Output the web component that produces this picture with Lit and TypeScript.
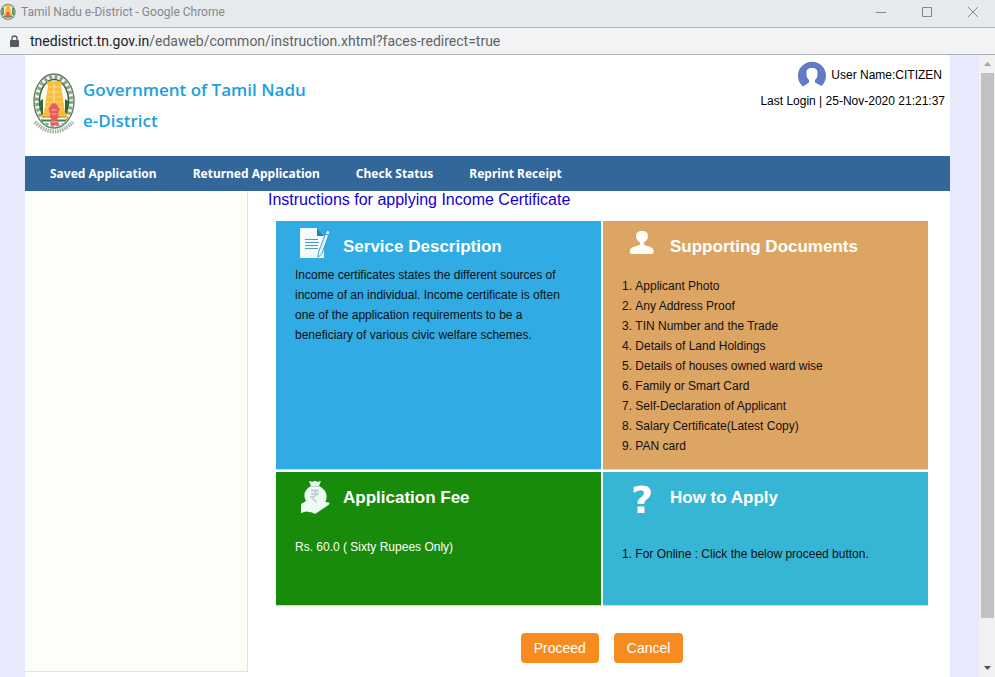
import { LitElement, html, css, svg } from "lit";
import { customElement } from "lit/decorators.js";

const emblem = svg`
  <ellipse cx="21" cy="28" rx="20" ry="27" fill="#f4f6ee" stroke="#5d7f60" stroke-width="1.4"/>
  <ellipse cx="21" cy="28" rx="17" ry="24" fill="none" stroke="#8ba48b" stroke-width="4" stroke-dasharray="3 2.4"/>
  <ellipse cx="21" cy="28" rx="14.5" ry="21.5" fill="#fffdf2" stroke="#2f6a3c" stroke-width="1.5"/>
  <path d="M8 38a14 21 0 0 1-1-10l3-2v16zM34 38a14 21 0 0 0 1-10l-3-2v16z" fill="#2d6b3c"/>
  <path d="M14 8l2 1 2.500-1.500 2.500 1.500 2.500-1.500 2 1.500 2.500-1 1 3-1 2 4 26 3 5H8l3-5 4-26-1-2z" fill="#f8bd3c"/>
  <path d="M16 14h11M15 19h13M14.500 24h14M13.500 29h16M12.500 34h17" stroke="#fbe39a" stroke-width="1.200" stroke-dasharray="2 1"/>
  <path d="M21 11v20" stroke="#fdd98a" stroke-width="1.500"/>
  <path d="M8 44h26l-3 6H11z" fill="#fff"/>
  <path d="M9 44h24" stroke="#e98f28" stroke-width="1.500"/>
  <path d="M9 47.500h24" stroke="#2f8a46" stroke-width="2"/>
  <path d="M18 32q3-4 6 0l2.500 4-1.500 5 1 3-2 2 1.500 4-2 2.500h-5L17 50l1.500-4-2-2 1-3-2-5z" fill="#ea5a5f"/>
  <path d="M18 37h6M18.500 41h5M18 49h6" stroke="#f8b0aa"/>
  <path d="M2 49q19 19 38 0" fill="none" stroke="#a5b4a5" stroke-width="4" stroke-dasharray="1.600 .9"/>`;

const icons = {
  document: svg`
    <path d="M2 1h17l7 8v22H2z" fill="#f4fbff"/>
    <path d="M19 1v8h7z" fill="#1d86b2"/>
    <path d="M7 12.500h13M7 15.500h14M7 18.500h13M7 21.500h13" stroke="#4d9dbf"/>
    <path d="M29 3l3 1.500-8 22-4 4 .5-5.500z" fill="#e4f5fd" stroke="#2e95c2" stroke-width=".9"/>
    <path d="M27.500 7l3 1.500" stroke="#2e95c2"/>`,
  person: svg`
    <path d="M17 4c4 0 6 2 6 5 0 3-1.500 5-4 6.500v2c1 1.500 9 2 9.500 5.500.5 2.500 0 4-2 4H7c-2 0-2.500-1.500-2-4 .5-3.500 9-4 10-5.500v-2c-2.500-1.500-4-3.500-4-6.500 0-3 2-5 6-5z" fill="#fffdf8"/>`,
  money: svg`
    <path d="M11 3l3 .8 3-.8 3 .8 3-.8-2 5c5 3 8 6 7.500 11 0 2-.5 4-1.500 5l4 .5q1 1-.5 2.500L20 34l-3 2-3-1.500-6-1L3 35v-9l5-3C5 18 6 12 13 8z" fill="#eefaf6"/>
    <path d="M13 8.500h8" stroke="#b9d9b9"/>
    <path d="M13 12.500h8M13 16h8M13.500 12.500c6-.5 6 6.500 0 6.500l5 5" fill="none" stroke="#c3cfd0" stroke-width="1.800"/>`,
  question: svg`<text class="mark" x="6" y="35">?</text>`,
};

@customElement("app-root")
class AppRoot extends LitElement {
  static styles = css`
    * { box-sizing: border-box; }
    :host {
      display: flex;
      flex-direction: column;
      min-height: 100vh;
      font: 12px/20px "Liberation Sans", Arial, sans-serif;
      color: #111;
      background: #e8e9fc;
    }
    h1, h2, p, ol { margin: 0; padding: 0; }
    svg { display: block; flex: none; overflow: visible; }
    button { font: inherit; border: 0; cursor: pointer; }
    .titlebar {
      display: flex;
      align-items: center;
      height: 28px;
      padding-bottom: 4px;
      background: #e7eaed;
      border-bottom: 1px solid #b0b2b4;
      color: #85888b;
      font: 12px/20px Roboto, "Noto Sans", sans-serif;
    }
    .window-title { flex: 1; padding-left: 4px; }
    .control {
      display: flex;
      align-items: center;
      justify-content: center;
      width: 46px;
      height: 23px;
      padding: 0 0 0 2px;
      background: none;
    }
    .address {
      display: flex;
      align-items: center;
      gap: 10px;
      height: 27px;
      padding-left: 9px;
      background: #f1f3f4;
      border-bottom: 1px solid #b0b2b4;
      color: #5f6368;
      font: 14px/20px Roboto, "Noto Sans", sans-serif;
    }
    .host { color: #202124; }
    .viewport { display: flex; flex: 1; }
    .page {
      flex: 1;
      display: flex;
      flex-direction: column;
      margin: 0 29px 0 25px;
      background: #fff;
    }
    .header {
      display: flex;
      justify-content: space-between;
      height: 101px;
      padding: 7px 5px 0 8px;
    }
    .brand { display: flex; gap: 8px; padding-top: 11px; }
    .brand-name {
      padding-top: 1px;
      color: #1ba0e1;
      font: 600 17px/31px "Open Sans", "Noto Sans", sans-serif;
    }
    .account { display: flex; flex-direction: column; align-items: flex-end; color: #000; }
    .user { display: flex; align-items: center; gap: 5px; height: 26px; padding-right: 3px; }
    .nav {
      display: flex;
      align-items: center;
      gap: 36px;
      height: 35px;
      padding-left: 25px;
      background: #336699;
    }
    .nav a {
      color: #fff;
      text-decoration: none;
      font: 700 12px/20px "Noto Sans", Tahoma, sans-serif;
    }
    .body { display: flex; flex: 1; align-items: flex-start; }
    .sidebar {
      width: 223px;
      height: 481px;
      background: #fefef8;
      border: solid #e2e2e2;
      border-width: 0 1px 1px 0;
    }
    .main { flex: 1; padding: 0 22px 0 20px; }
    .page-title { color: #1400d2; font-size: 16px; font-weight: 400; line-height: 18px; }
    .cards {
      display: grid;
      grid-template-columns: 1fr 1fr;
      grid-template-rows: 249px 134px;
      gap: 2px;
      margin: 12px 0 0 8px;
    }
    .card { padding: 6px 18px 0 19px; border-bottom: 1px solid #cfdcd6; }
    .blue { background: #30abe4; }
    .tan { background: #dda564; }
    .green { background: #188b0b; color: #fff; }
    .cyan { background: #37b5d4; }
    .card-head { display: flex; gap: 11px; height: 38px; padding-left: 3px; }
    .card-title { color: #fff; font-size: 17px; line-height: 40px; }
    .mark { fill: #fff; font: 700 38px "DejaVu Sans", Verdana, sans-serif; }
    .blurb { max-width: 280px; }
    .documents { padding-top: 11px; list-style-position: inside; }
    .fee { padding-top: 21px; }
    .steps { padding-top: 28px; list-style-position: inside; }
    .actions { display: flex; justify-content: center; gap: 15px; padding: 27px 0 14px 8px; }
    .action {
      height: 30px;
      padding: 0 13px;
      border-radius: 4px;
      background: #f68c1f;
      color: #fff;
      font-size: 14px;
    }
    .scrollbar {
      display: flex;
      flex-direction: column;
      align-items: center;
      width: 16px;
      background: #f1f1f1;
    }
    .arrow { display: flex; align-items: center; justify-content: center; height: 18px; }
    .thumb { flex: 545; width: 13px; background: #c1c1c1; }
    .track { flex: 41; }
    .last-login { padding-top: 3px; }
  `;

  private card(tone: string, icon: keyof typeof icons, title: string, content: unknown) {
    return html`
      <section class="card ${tone}">
        <div class="card-head">
          <svg width="34" height="38" viewBox="0 0 34 38" aria-hidden="true">${icons[icon]}</svg>
          <h2 class="card-title">${title}</h2>
        </div>
        ${content}
      </section>`;
  }

  render() {
    const documents = [
      "Applicant Photo",
      "Any Address Proof",
      "TIN Number and the Trade",
      "Details of Land Holdings",
      "Details of houses owned ward wise",
      "Family or Smart Card",
      "Self-Declaration of Applicant",
      "Salary Certificate(Latest Copy)",
      "PAN card",
    ];
    const links = ["Saved Application", "Returned Application", "Check Status", "Reprint Receipt"];
    return html`
      <div class="titlebar">
        <svg width="17" height="18" viewBox="0 0 17 18" aria-hidden="true">
          <ellipse cx="8" cy="9" rx="7" ry="7.500" fill="#f0f2e6" stroke="#7e9b7e" stroke-width="1.500"/>
          <path d="M3 5v7M13 5v7" stroke="#3f7a4b" stroke-width="1.500"/>
          <path d="M6 3h4l2 10H4z" fill="#f6b93a"/>
          <path d="M4 13.500h8" stroke="#3f8a4b" stroke-width="1.500"/>
          <path d="M7 9h2l1 4-1 2H7l-1-2z" fill="#e9545b"/>
        </svg>
        <span class="window-title">Tamil Nadu e-District - Google Chrome</span>
        <button class="control" aria-label="Minimize">
          <svg width="12" height="12" viewBox="0 0 12 12" fill="none" stroke="#85888b"><path d="M1 6.500h10"/></svg>
        </button>
        <button class="control" aria-label="Maximize">
          <svg width="12" height="12" viewBox="0 0 12 12" fill="none" stroke="#85888b"><path d="M1.500 1.500h9v9h-9z"/></svg>
        </button>
        <button class="control" aria-label="Close">
          <svg width="12" height="12" viewBox="0 0 12 12" fill="none" stroke="#85888b"><path d="M1 1l10 10M11 1L1 11"/></svg>
        </button>
      </div>
      <div class="address">
        <svg width="11" height="13" viewBox="0 0 11 13" aria-hidden="true">
          <path d="M3 6V3.500a2.500 2.500 0 0 1 5 0V6" fill="none" stroke="#55585c" stroke-width="1.300"/>
          <rect x="1" y="5" width="9" height="7" rx="1" fill="#55585c"/>
        </svg>
        <span><span class="host">tnedistrict.tn.gov.in</span>/edaweb/common/instruction.xhtml?faces-redirect=true</span>
      </div>
      <div class="viewport">
        <div class="page">
          <header class="header">
            <div class="brand">
              <svg width="42" height="62" viewBox="0 0 42 62" role="img" aria-label="Tamil Nadu emblem">${emblem}</svg>
              <div class="brand-name">Government of Tamil Nadu<br>e-District</div>
            </div>
            <div class="account">
              <div class="user">
                <svg width="28" height="26" viewBox="0 0 28 26" aria-hidden="true">
                  <path d="M5 24.500A14 14 0 1 1 23.500 24L17 20.500v-2.500c2-1.500 2.500-3.500 2.500-6.500C20 8 18 6 14 6s-6 2-5.500 5.500c0 3 .5 5 2.500 6.500v2.500z" fill="#637bc6"/>
                </svg>
                <span>User Name:CITIZEN</span>
              </div>
              <div class="last-login">Last Login | 25-Nov-2020 21:21:37</div>
            </div>
          </header>
          <nav class="nav">${links.map((label) => html`<a href="#">${label}</a>`)}</nav>
          <div class="body">
            <aside class="sidebar"></aside>
            <main class="main">
              <h1 class="page-title">Instructions for applying Income Certificate</h1>
              <div class="cards">
                ${this.card("blue", "document", "Service Description", html`<p class="blurb">
                  Income certificates states the different sources of income of an individual. Income
                  certificate is often one of the application requirements to be a beneficiary of various
                  civic welfare schemes.</p>`)}
                ${this.card("tan", "person", "Supporting Documents", html`<ol class="documents">
                  ${documents.map((name) => html`<li>${name}</li>`)}</ol>`)}
                ${this.card("green", "money", "Application Fee", html`<p class="fee">Rs. 60.0 ( Sixty Rupees Only)</p>`)}
                ${this.card("cyan", "question", "How to Apply", html`<ol class="steps">
                  <li>For Online : Click the below proceed button.</li></ol>`)}
              </div>
              <div class="actions">
                <button class="action">Proceed</button>
                <button class="action">Cancel</button>
              </div>
            </main>
          </div>
        </div>
        <div class="scrollbar" aria-hidden="true">
          <div class="arrow"><svg width="7" height="4" viewBox="0 0 7 4"><path d="M0 4L3.500 0 7 4z" fill="#a3a3a3"/></svg></div>
          <div class="thumb"></div>
          <div class="track"></div>
          <div class="arrow"><svg width="7" height="4" viewBox="0 0 7 4"><path d="M0 0l3.500 4L7 0z" fill="#505050"/></svg></div>
        </div>
      </div>`;
  }
}
